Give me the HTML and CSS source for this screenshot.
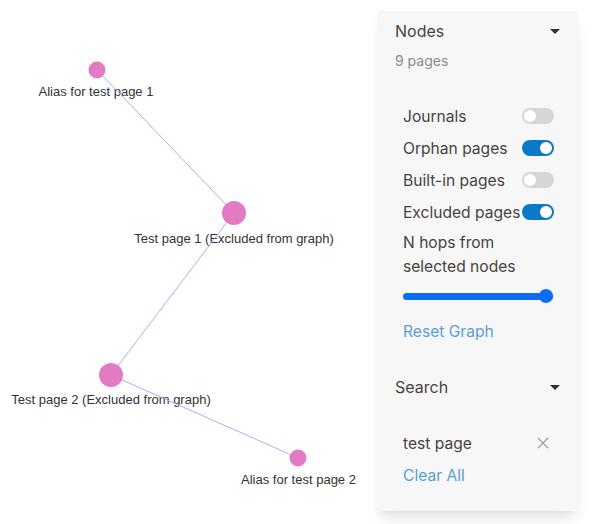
FILE: index.html
```html
<!DOCTYPE html>
<html>
<head>
<meta charset="utf-8">
<link rel="stylesheet" href="styles.css">
</head>
<body>
<div class="stage">
  <svg class="graph" width="595" height="524" viewBox="0 0 595 524">
    <g class="labels">
      <text x="96" y="96">Alias for test page 1</text>
      <text x="234" y="243">Test page 1 (Excluded from graph)</text>
      <text x="111" y="404">Test page 2 (Excluded from graph)</text>
      <text x="298.5" y="484">Alias for test page 2</text>
    </g>
    <g class="edges">
      <line x1="97" y1="70" x2="234" y2="213"/>
      <line x1="234" y1="213" x2="111" y2="375"/>
      <line x1="111" y1="375" x2="298" y2="458"/>
    </g>
    <g class="nodes">
      <circle cx="97" cy="70" r="8.5"/>
      <circle cx="234" cy="213" r="12"/>
      <circle cx="111" cy="375" r="12"/>
      <circle cx="298" cy="458" r="8.5"/>
    </g>
  </svg>

  <aside class="panel">
    <div class="section-header">
      <span class="section-title">Nodes</span>
      <span class="caret"></span>
    </div>
    <div class="count">9 pages</div>
    <div class="items">
      <div class="row row-first"><span>Journals</span><span class="toggle"></span></div>
      <div class="row"><span>Orphan pages</span><span class="toggle on"></span></div>
      <div class="row"><span>Built-in pages</span><span class="toggle"></span></div>
      <div class="row"><span>Excluded pages</span><span class="toggle on"></span></div>
      <div class="hops">N hops from<br>selected nodes</div>
      <div class="slider"><div class="track"></div><div class="thumb"></div></div>
      <div class="link reset">Reset Graph</div>
    </div>
    <div class="section-header search-header">
      <span class="section-title">Search</span>
      <span class="caret"></span>
    </div>
    <div class="items">
      <div class="row query"><span>test page</span><span class="close"><svg width="12" height="12" viewBox="0 0 12 12"><path d="M1 1 L11 11 M11 1 L1 11" stroke="#9d9d9d" stroke-width="1.2" fill="none"/></svg></span></div>
      <div class="link clear">Clear All</div>
    </div>
  </aside>
</div>
</body>
</html>
```

FILE: styles.css
```css
html, body {
  margin: 0;
  padding: 0;
  background: #ffffff;
}
.stage {
  position: relative;
  width: 595px;
  height: 524px;
  overflow: hidden;
}
.graph {
  position: absolute;
  left: 0;
  top: 0;
}
.labels text {
  font-family: "Liberation Sans", Arial, sans-serif;
  font-size: 13px;
  fill: #333333;
  text-anchor: middle;
}
.edges line {
  stroke: #a3b0f7;
  stroke-width: 1;
}
.nodes circle {
  fill: #e37bc3;
}
.panel {
  position: absolute;
  left: 378px;
  top: 11px;
  width: 200px;
  box-sizing: border-box;
  padding: 0 17px 23px 17px;
  background: #f7f7f7;
  border-radius: 0 0 4px 4px;
  box-shadow: 0 10px 15px -3px rgba(0,0,0,0.1), 0 4px 6px -2px rgba(0,0,0,0.05);
  font-family: Inter, "Noto Sans", sans-serif;
  color: #47433f;
}
.section-header {
  height: 40px;
  display: flex;
  align-items: center;
  justify-content: space-between;
}
.section-title {
  font-size: 16px;
}
.caret {
  width: 0;
  height: 0;
  border-left: 5px solid transparent;
  border-right: 5px solid transparent;
  border-top: 5px solid #2f2f2f;
  margin-right: 1px;
}
.count {
  font-size: 14px;
  line-height: 20px;
  color: #8b8b8b;
}
.items {
  padding: 0 8px;
  font-size: 15.6px;
}
.row {
  height: 32px;
  display: flex;
  align-items: center;
  justify-content: space-between;
  white-space: nowrap;
}
.row-first {
  margin-top: 29px;
}
.toggle {
  position: relative;
  flex: none;
  width: 32px;
  height: 16px;
  border-radius: 8px;
  background: #d6d6d6;
  margin-right: -1px;
}
.toggle::after {
  content: "";
  position: absolute;
  top: 2px;
  left: 2px;
  width: 12px;
  height: 12px;
  border-radius: 50%;
  background: #ffffff;
}
.toggle.on {
  background: #0a7ac6;
}
.toggle.on::after {
  left: 18px;
}
.hops {
  margin-top: 3px;
  line-height: 24px;
}
.slider {
  position: relative;
  margin-top: 7px;
  height: 20px;
  display: flex;
  align-items: center;
}
.track {
  width: 100%;
  height: 7px;
  border-radius: 4px;
  background: #0b6cf6;
}
.thumb {
  position: absolute;
  right: 0;
  top: 3px;
  width: 14px;
  height: 14px;
  border-radius: 50%;
  background: #0b6cf6;
}
.link {
  line-height: 24px;
  color: #5c9ecf;
}
.reset {
  margin-top: 14px;
}
.search-header {
  margin-top: 23px;
}
.query {
  margin-top: 20px;
}
.close {
  width: 20px;
  height: 12px;
  display: flex;
  justify-content: center;
}
.clear {
  margin-top: 5px;
}
```
